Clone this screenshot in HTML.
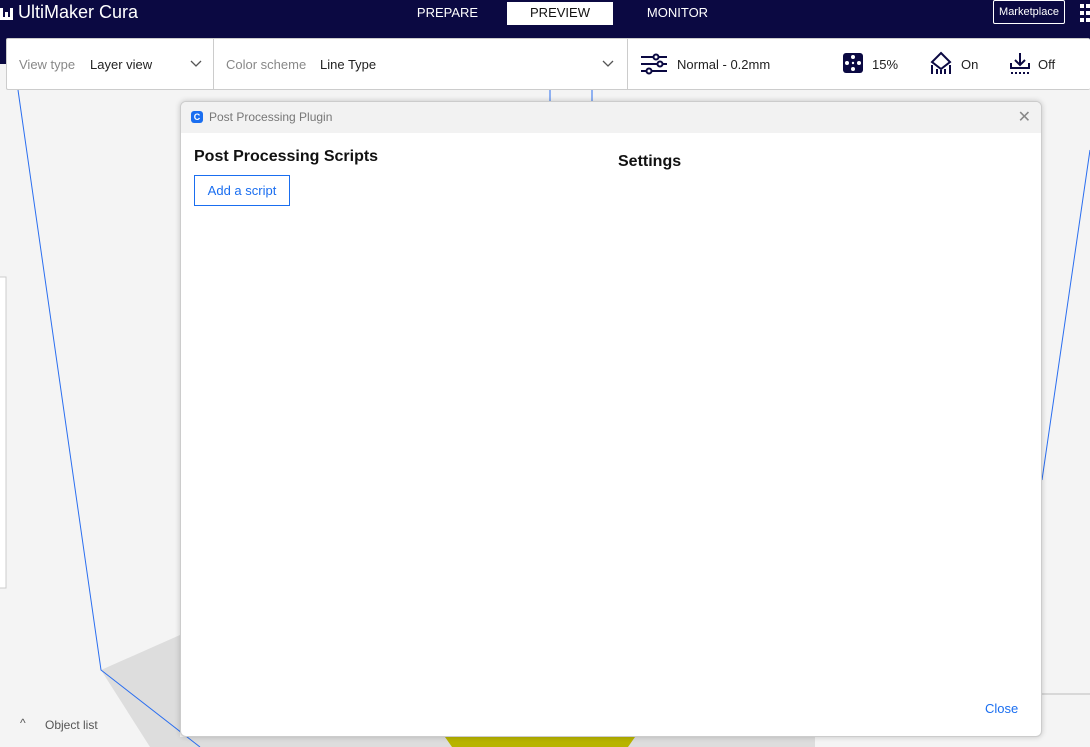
<!DOCTYPE html>
<html><head><meta charset="utf-8"><style>
*{margin:0;padding:0;box-sizing:border-box}
body{width:1090px;height:747px;overflow:hidden;background:#f4f4f4;font-family:"Liberation Sans","Noto Sans CJK SC",sans-serif;position:relative}
.top{position:absolute;left:0;top:0;width:1090px;height:64px;background:#0b0942}
.logo{position:absolute;left:18px;top:2px;color:#fff;font-size:18px}
.tab{position:absolute;top:2px;height:23px;line-height:21px;font-size:13px;color:#fff;text-align:center}
.bar{position:absolute;left:6px;top:38px;width:1084px;height:52px;background:#fff;border:1px solid #ccc;border-right:none;border-radius:2px}
.t{position:absolute;font-size:13px;color:#222}
.g{color:#888}
.dlg{position:absolute;left:180px;top:101px;width:862px;height:636px;background:#fff;border:1px solid #ccc;border-radius:6px;box-shadow:0 0 6px rgba(0,0,0,.2);overflow:hidden}
.dt{height:31px;background:#f2f2f2;font-size:12px;color:#777;line-height:31px;padding-left:28px;position:relative}
</style></head><body>
<svg style="position:absolute;left:0;top:0" width="1090" height="747">
<polygon points="101,670 180,635 180,747 150,747" fill="#ddd"/>
<polygon points="180,737 815,737 815,747 180,747" fill="#ddd"/>
<polygon points="445,737 635,737 628,747 452,747" fill="#b8b400"/>
<polyline points="18,90 101,670 200,747" fill="none" stroke="#2a6ef0" stroke-width="1"/>
<line x1="1090" y1="150" x2="1042" y2="480" stroke="#2a6ef0"/>
<line x1="550" y1="90" x2="550" y2="101" stroke="#2a6ef0"/>
<line x1="592" y1="90" x2="592" y2="101" stroke="#2a6ef0"/>
<line x1="815" y1="694" x2="1090" y2="694" stroke="#bbb"/>
<rect x="-1" y="277" width="7" height="311" fill="#fff" stroke="#ccc"/>
</svg>
<div class="top">
<svg style="position:absolute;left:0;top:6px" width="14" height="14"><g fill="#fff"><rect x="0" y="2" width="3" height="12"/><rect x="5" y="6" width="3" height="8"/><rect x="10" y="2" width="3" height="12"/><rect x="0" y="11" width="13" height="3"/></g></svg>
<div class="logo">UltiMaker Cura</div>
<div class="tab" style="left:395px;width:105px">PREPARE</div>
<div class="tab" style="left:507px;width:106px;background:#fff;color:#111">PREVIEW</div>
<div class="tab" style="left:625px;width:105px">MONITOR</div>
<div style="position:absolute;left:993px;top:0;width:72px;height:24px;border:1px solid #fff;border-radius:2px;color:#fff;font-size:11px;line-height:22px;text-align:center">Marketplace</div>
<svg style="position:absolute;left:1080px;top:4px" width="10" height="18"><g fill="#fff"><rect x="0" y="0" width="4" height="4"/><rect x="6" y="0" width="4" height="4"/><rect x="0" y="7" width="4" height="4"/><rect x="6" y="7" width="4" height="4"/><rect x="0" y="14" width="4" height="4"/><rect x="6" y="14" width="4" height="4"/></g></svg>
</div>
<div class="bar">
<div class="t g" style="left:12px;top:18px">View type</div>
<div class="t" style="left:83px;top:18px">Layer view</div>
<svg style="position:absolute;left:183px;top:21px" width="12" height="8"><path d="M1 1 L6 6 L11 1" fill="none" stroke="#555" stroke-width="1.3"/></svg>
<div style="position:absolute;left:206px;top:0;width:1px;height:50px;background:#ccc"></div>
<div class="t g" style="left:219px;top:18px">Color scheme</div>
<div class="t" style="left:313px;top:18px">Line Type</div>
<svg style="position:absolute;left:595px;top:21px" width="12" height="8"><path d="M1 1 L6 6 L11 1" fill="none" stroke="#555" stroke-width="1.3"/></svg>
<div style="position:absolute;left:620px;top:0;width:1px;height:50px;background:#ccc"></div>
<svg style="position:absolute;left:634px;top:14px" width="28" height="22"><g stroke="#0b0942" stroke-width="2" fill="#fff"><line x1="0" y1="4" x2="26" y2="4"/><line x1="0" y1="11" x2="26" y2="11"/><line x1="0" y1="18" x2="26" y2="18"/><circle cx="15" cy="4" r="2.5"/><circle cx="19" cy="11" r="2.5"/><circle cx="8" cy="18" r="2.5"/></g></svg>
<div class="t" style="left:670px;top:18px">Normal - 0.2mm</div>
<svg style="position:absolute;left:836px;top:14px" width="21" height="21"><rect width="20" height="20" rx="3" fill="#0b0942"/><g fill="#fff"><circle cx="10" cy="4" r="2"/><circle cx="4" cy="10" r="2"/><circle cx="16" cy="10" r="2"/><circle cx="10" cy="16" r="2"/><circle cx="10" cy="10" r="1.2"/></g></svg>
<div class="t" style="left:865px;top:18px">15%</div>
<svg style="position:absolute;left:923px;top:12px" width="22" height="24"><path d="M11 2 L20 11 L11 18 L2 11 Z" fill="none" stroke="#0b0942" stroke-width="2"/><g stroke="#0b0942" stroke-width="2"><line x1="2" y1="14" x2="2" y2="23"/><line x1="7" y1="18" x2="7" y2="23"/><line x1="11" y1="19" x2="11" y2="23"/><line x1="15" y1="18" x2="15" y2="23"/><line x1="20" y1="14" x2="20" y2="23"/></g></svg>
<div class="t" style="left:954px;top:18px">On</div>
<svg style="position:absolute;left:1002px;top:12px" width="22" height="24"><path d="M11 2 V14 M6 9 L11 14 L16 9 M2 12 V17 H20 V12" fill="none" stroke="#0b0942" stroke-width="2"/><line x1="2" y1="22" x2="20" y2="22" stroke="#0b0942" stroke-width="2" stroke-dasharray="2 2"/></svg>
<div class="t" style="left:1031px;top:18px">Off</div>
</div>
<div style="position:absolute;left:20px;top:716px;font-size:12px;color:#555">^</div>
<div style="position:absolute;left:45px;top:718px;font-size:12px;color:#555">Object list</div>
<div class="dlg">
<div class="dt"><span style="position:absolute;left:10px;top:9px;width:12px;height:12px;background:#1a6ef0;border-radius:3px;color:#fff;font-size:9px;line-height:12px;text-align:center;font-weight:bold">C</span>Post Processing Plugin<span style="position:absolute;right:10px;top:0;font-size:16px;color:#888">✕</span></div>
<div style="position:absolute;left:13px;top:46px;font-size:16px;font-weight:bold;color:#111">Post Processing Scripts</div>
<div style="position:absolute;left:437px;top:51px;font-size:16px;font-weight:bold;color:#111">Settings</div>
<div style="position:absolute;left:13px;top:73px;width:96px;height:31px;border:1px solid #1a6ef0;color:#1a6ef0;font-size:13px;line-height:29px;text-align:center">Add a script</div>
<div style="position:absolute;left:804px;top:599px;font-size:13px;color:#1a6ef0">Close</div>
</div>
</body></html>
